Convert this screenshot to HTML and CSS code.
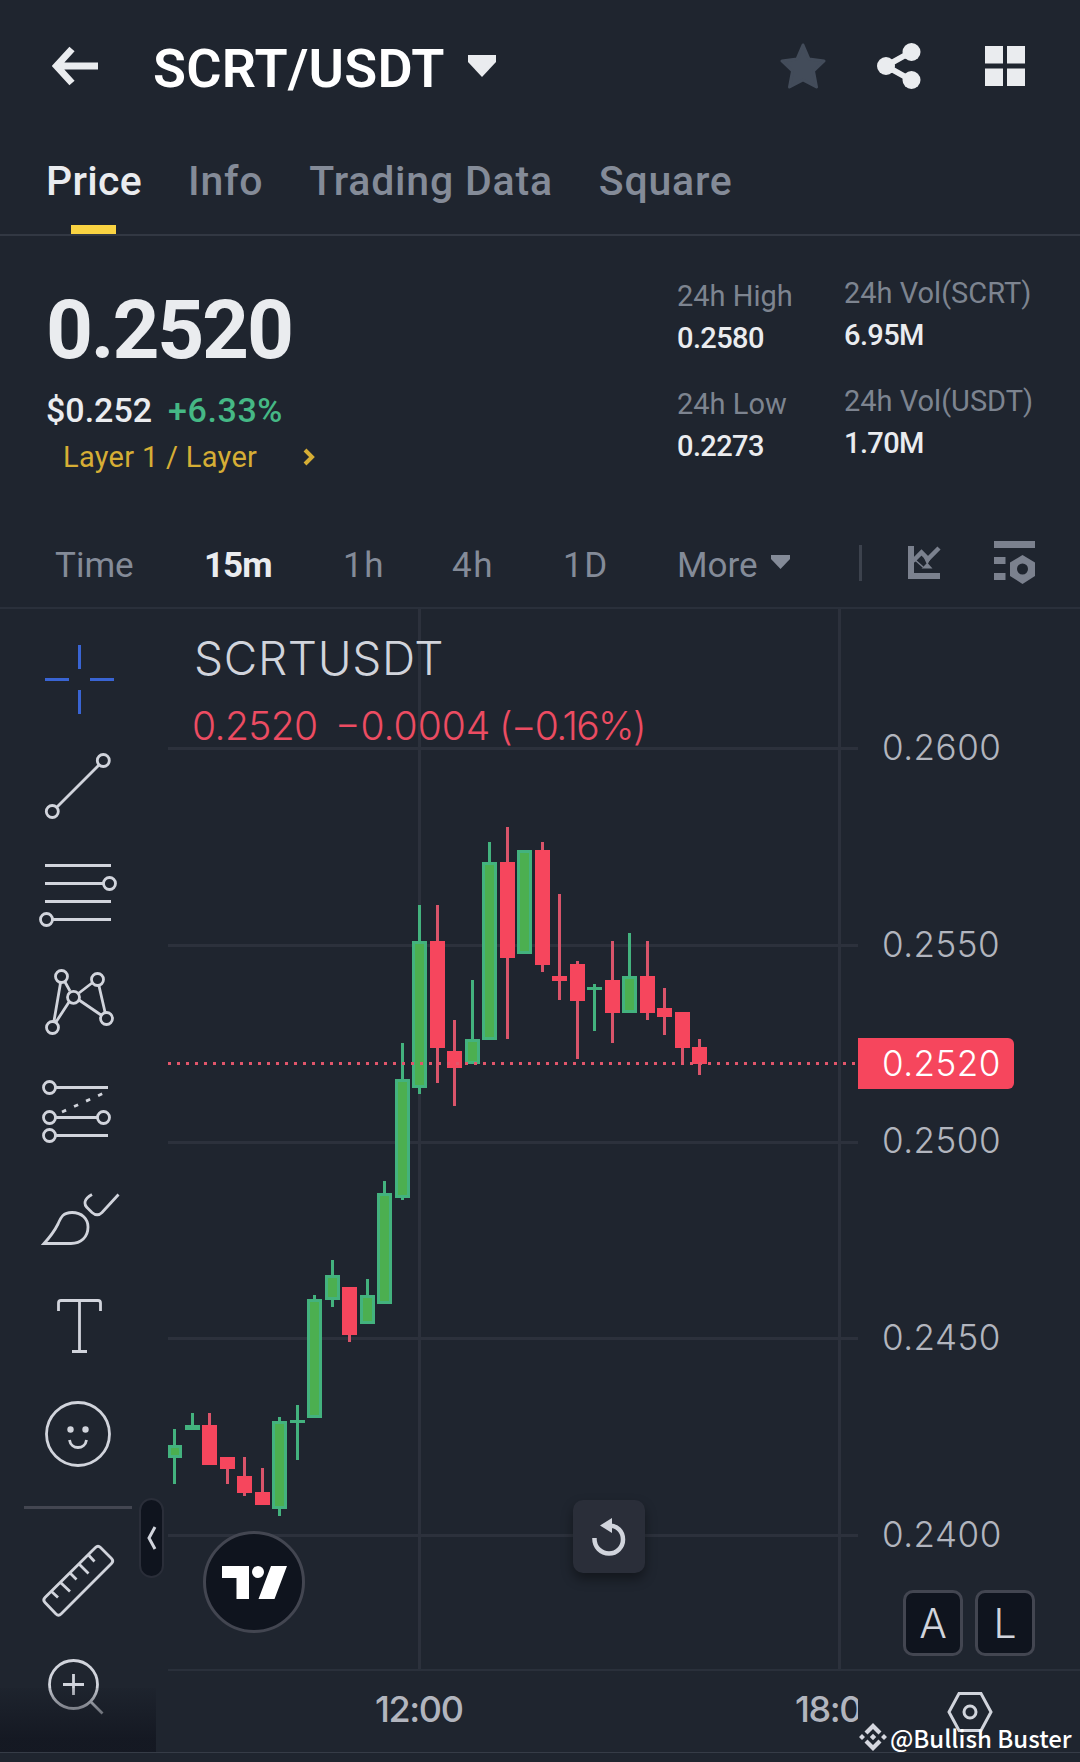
FILE: index.html
```html
<!DOCTYPE html>
<html lang="en">

<head>
    <meta charset="UTF-8">
    <meta name="viewport" content="width=device-width, initial-scale=1.0">
    <title>SCRT/USDT</title>
    <link rel="stylesheet" href="styles.css">
</head>

<body>
    <header class="header">
        <svg class="back" width="48" height="40" viewBox="0 0 48 40"><path d="M20 3L4.500 20L20 37M5 20H46" fill="none" stroke="#eaecef" stroke-width="7"/></svg>
        <h1>SCRT/USDT</h1>
        <svg class="caret" width="28" height="22" viewBox="0 0 28 22"><path d="M0 0H28V7L14 22L0 7Z" fill="#eaecef"/></svg>
        <div class="header-icons">
            <svg width="46" height="48" viewBox="0 0 46 48"><path d="M23 3L29 17L44 19L33.500 29L36.500 45L23 38L9.500 45L12.500 29L2 19L17 17Z" fill="#434c5a" stroke="#434c5a" stroke-width="3" stroke-linejoin="round"/></svg>
            <svg width="44" height="46" viewBox="0 0 44 46"><path d="M34 9L9 23L34 37" fill="none" stroke="#eaecef" stroke-width="6"/><g fill="#eaecef"><circle cx="34.500" cy="9" r="9"/><circle cx="9" cy="23" r="9"/><circle cx="34.500" cy="37" r="9"/></g></svg>
            <svg width="40" height="40" viewBox="0 0 40 40"><path d="M0 0H18V17.500H0ZM22 0H40V17.500H22ZM0 22.500H18V40H0ZM22 22.500H40V40H22Z" fill="#eaecef"/></svg>
        </div>
    </header>

    <nav class="tabs">
        <a class="active">Price</a>
        <a>Info</a>
        <a>Trading Data</a>
        <a>Square</a>
    </nav>

    <section class="ticker">
        <div class="ticker-main">
            <div class="last-price">0.2520</div>
            <div class="change"><span>$0.252</span><span class="up">+6.33%</span></div>
            <div class="category">Layer 1 / Layer <svg width="12" height="18" viewBox="0 0 12 18"><path d="M2 2L9 9L2 16" fill="none" stroke="#d6ae35" stroke-width="4"/></svg></div>
        </div>
        <dl class="stats">
            <dt>24h High</dt>
            <dd>0.2580</dd>
            <dt>24h Low</dt>
            <dd>0.2273</dd>
        </dl>
        <dl class="stats volume">
            <dt>24h Vol(SCRT)</dt>
            <dd>6.95M</dd>
            <dt>24h Vol(USDT)</dt>
            <dd>1.70M</dd>
        </dl>
    </section>

    <div class="intervals">
        <span>Time</span>
        <span class="active">15m</span>
        <span class="spaced">1h</span>
        <span class="spaced">4h</span>
        <span class="spaced">1D</span>
        <span>More<svg class="more-caret" width="19" height="14" viewBox="0 0 19 14"><path d="M0 0H19V4L9.500 14L0 4Z" fill="#848b98"/></svg></span>
        <i class="divider"></i>
        <svg width="33" height="33" viewBox="0 0 33 33"><g fill="none" stroke="#7b818e"><path d="M3 0V30H32" stroke-width="6"/><path d="M5 15L13.500 6.500L20 13L31 2" stroke-width="4.500"/><path d="M6 13L15 21" stroke-width="1.500"/></g><path d="M13.500 22.500H24.500L20 17.500L23 12H16L18.500 17.500Z" fill="#7b818e"/></svg>
        <svg width="42" height="43" viewBox="0 0 42 43"><path d="M0 0H41V7H0ZM0 16H11.500V23H0ZM0 32H11.500V39H0Z" fill="#7b818e"/><path fill-rule="evenodd" d="M28.500 14L41 21.500V35L28.500 43L16 35V21.500ZM28.500 22.500A5.500 5.500 0 1 0 28.500 33.500A5.500 5.500 0 1 0 28.500 22.500Z" fill="#7b818e"/></svg>
    </div>

    <main class="chart">
        <aside class="toolbar">
            <!-- crosshair -->
            <svg class="cross" width="156" height="121" viewBox="0 609 156 121"><path d="M45 679.500H69M90 679.500H114M79.500 645V669M79.500 690V714"/></svg>
            <!-- trend line -->
            <svg width="156" height="110" viewBox="0 730 156 110"><path d="M57 807L99 765"/><circle cx="103.300" cy="760.500" r="6"/><circle cx="52.300" cy="811.500" r="6"/></svg>
            <!-- fib retracement -->
            <svg width="156" height="110" viewBox="0 840 156 110"><path d="M45 865.500H111M45 883.500H103M45 901.500H111M53 919.500H111"/><circle cx="109.500" cy="883.500" r="6"/><circle cx="46.500" cy="919.500" r="6"/></svg>
            <!-- xabcd pattern -->
            <svg width="156" height="110" viewBox="0 950 156 110"><path d="M60.500 983L54 1021M65 982L70 991M79 993L92 983M99 986L105 1012M79 1000L101 1015M69 1002L56 1022"/><circle cx="61.500" cy="976.500" r="6"/><circle cx="97.500" cy="979.500" r="6"/><circle cx="73.500" cy="997.300" r="6"/><circle cx="52.500" cy="1027.500" r="6"/><circle cx="106.500" cy="1018.500" r="6"/></svg>
            <!-- long position -->
            <svg width="156" height="110" viewBox="0 1060 156 110"><path d="M56 1087.500H108M56 1117.500H97M56 1135.500H108"/><path d="M62 1112L104 1093" stroke-dasharray="4.500 8.700"/><circle cx="49.500" cy="1087.500" r="6"/><circle cx="49.500" cy="1117.500" r="6"/><circle cx="103.500" cy="1117.500" r="6"/><circle cx="49.500" cy="1135.500" r="6"/></svg>
            <!-- brush -->
            <svg width="156" height="105" viewBox="0 1170 156 105"><path d="M92 1194.500C84 1199 83 1204 88 1208.500L92 1212.500C96 1216 99 1215.500 102 1212.500L118.500 1194.500"/><path d="M44 1243.500C50 1237 55 1230 58 1224C61 1217 63 1212.500 72 1212.500C82 1212.500 88 1219 88 1227C88 1237 81 1243.500 71 1243.500Z"/></svg>
            <!-- text -->
            <svg width="156" height="105" viewBox="0 1275 156 105"><path d="M58.500 1311V1303Q58.500 1300.500 61 1300.500H98Q100.500 1300.500 100.500 1303V1311M79.500 1300.500V1351.500M72 1351.500H87"/></svg>
            <!-- emoji -->
            <svg width="156" height="122" viewBox="0 1380 156 122"><circle cx="78" cy="1434" r="31.500"/><path d="M69.500 1440C71 1450 85 1450 86.500 1440"/><g fill="#d1d4dc" stroke="none"><circle cx="70.500" cy="1429.500" r="3.200"/><circle cx="85.500" cy="1429.500" r="3.200"/></g></svg>
            <hr>
            <!-- ruler -->
            <svg width="156" height="120" viewBox="0 1510 156 120"><path d="M95.500 1547.500Q98 1545 100.500 1547.500L111.500 1558.500Q114 1561 111.500 1563.500L61 1614Q58.500 1616.500 56 1614L45 1602.500Q42.500 1600 45 1597.500ZM51 1591L58 1597.500M60 1582L70 1591.500M70 1573L76.500 1579.500M79 1564L88.500 1573.500M88.500 1555L94.500 1561.500"/></svg>
            <!-- zoom in -->
            <svg width="156" height="122" viewBox="0 1630 156 122"><circle cx="73.500" cy="1684.500" r="24"/><path d="M63 1684.500H84M73.500 1674V1695M90.500 1701.500L102.500 1713.500"/></svg>
            <div class="fade"></div>
        </aside>

        <div class="pane">
            <svg id="plot" width="702" height="1060" viewBox="156 609 702 1060">
                <g stroke="#2c313c" stroke-width="3">
                    <path d="M168 748.500H858M168 945.500H858M168 1142.500H858M168 1338.500H858M168 1535.500H858"/>
                    <path d="M419.500 609V1669M839.500 609V1669"/>
                </g>
                <g id="candles"></g>
                <path d="M168 1063.500H858" stroke="#e2566b" stroke-width="3" stroke-dasharray="3 6"/>
            </svg>
            <div class="legend">
                <div class="symbol">SCRTUSDT</div>
                <div class="values"><span>0.2520</span><span>−0.0004</span><span>(−0.16%)</span></div>
            </div>
            <div class="handle"><svg width="10" height="24" viewBox="0 0 10 24"><path d="M8 1L2 12L8 23" fill="none" stroke="#d1d4dc" stroke-width="3"/></svg></div>
            <div class="tv-logo"><svg width="65" height="33" viewBox="0 0 65 33"><path d="M0 0H27V33H14.500V12H0ZM49 0H65L52.500 33H36.500Z" fill="#fff"/><circle cx="36" cy="6" r="6" fill="#fff"/></svg></div>
            <button class="reset"><svg width="34" height="38" viewBox="0 0 34 38"><path d="M2.500 20C2 29 9 35.500 17 35.500C25 35.500 31 29 31 21.500C31 13 25 7.500 17 7.500" fill="none" stroke="#d1d4dc" stroke-width="4.500"/><path d="M8 7.500L20 0V15Z" fill="#d1d4dc"/></svg></button>
        </div>

        <div class="price-axis">
            <span>0.2600</span>
            <span>0.2550</span>
            <span>0.2500</span>
            <span>0.2450</span>
            <span>0.2400</span>
            <div class="price-tag">0.2520</div>
            <div class="scale-btns"><button>A</button><button>L</button></div>
        </div>

        <div class="time-axis">
            <span>12:00</span>
            <span>18:00</span>
        </div>
        <div class="axis-settings">
            <svg width="46" height="40" viewBox="0 0 46 40" fill="none" stroke="#d1d4dc" stroke-width="3"><path d="M12 1.500H34L44 20L34 38.500H12L2 20Z"/><circle cx="23" cy="20" r="6"/></svg>
        </div>
    </main>

    <div class="watermark">
        <svg width="28" height="28" viewBox="0 0 28 28" fill="#d5d7df"><path d="M14 0L22.500 8.500L19.500 11.500L14 6L8.500 11.500L5.500 8.500ZM14 28L22.500 19.500L19.500 16.500L14 22L8.500 16.500L5.500 19.500ZM14 10.800L17.200 14L14 17.200L10.800 14ZM3 11L6 14L3 17L0 14ZM25 11L28 14L25 17L22 14Z"/></svg>
        <span>@Bullish Buster</span>
    </div>

    <script>
        // center x, high, body top, body bottom, low, up
        const candles = [
            [174.500, 1429, 1445, 1458, 1484, 1],
            [192.500, 1413, 1425, 1430, 1430, 1],
            [209.500, 1413, 1425, 1465, 1465, 0],
            [227.500, 1457, 1457, 1469, 1484, 0],
            [244.500, 1457, 1476, 1493, 1496, 0],
            [262.500, 1468, 1492, 1505, 1505, 0],
            [279.500, 1417, 1421, 1509, 1516, 1],
            [297.500, 1405, 1420, 1423, 1460, 1],
            [314.500, 1295, 1299, 1418, 1418, 1],
            [332.500, 1260, 1275, 1300, 1307, 1],
            [349.500, 1287, 1287, 1335, 1342, 0],
            [367.500, 1279, 1295, 1324, 1324, 1],
            [384.500, 1181, 1193, 1304, 1304, 1],
            [402.500, 1043, 1079, 1198, 1200, 1],
            [419.500, 905, 941, 1088, 1094, 1],
            [437.500, 905, 941, 1048, 1083, 0],
            [454.500, 1020, 1051, 1068, 1106, 0],
            [472.500, 980, 1039, 1064, 1064, 1],
            [489.500, 842, 862, 1040, 1040, 1],
            [507.500, 827, 862, 958, 1039, 0],
            [524.500, 850, 850, 954, 954, 1],
            [542.500, 842, 850, 965, 972, 0],
            [559.500, 894, 976, 981, 1000, 0],
            [577.500, 961, 964, 1001, 1059, 0],
            [594.500, 984, 987, 990, 1031, 1],
            [612.500, 941, 980, 1013, 1043, 0],
            [629.500, 933, 976, 1013, 1013, 1],
            [647.500, 941, 976, 1013, 1020, 0],
            [664.500, 988, 1008, 1017, 1035, 0],
            [682.500, 1012, 1012, 1048, 1065, 0],
            [699.500, 1039, 1047, 1064, 1075, 0]
        ];

        const group = document.getElementById('candles');

        function rect(x, y, w, h, cls) {
            const r = document.createElementNS('http://www.w3.org/2000/svg', 'rect');
            r.setAttribute('x', x);
            r.setAttribute('y', y);
            r.setAttribute('width', w);
            r.setAttribute('height', h);
            r.setAttribute('class', cls);
            group.appendChild(r);
        }

        candles.forEach(function ([x, high, top, bottom, low, up]) {
            // the first candle is cut by the left edge of the plot
            const left = Math.max(x - 7.500, 168);
            const right = x + 7.500;
            rect(x - 1.500, high, 3, low - high, up ? 'wick-up' : 'wick-down');
            rect(left, top, right - left, bottom - top, up ? 'body-up' : 'body-down');
            if (up && bottom - top > 6) {
                rect(left + 3, top + 3, right - left - 6, bottom - top - 6, 'fill-up');
            }
        });
    </script>
</body>

</html>
```
FILE: styles.css
```css
* {
    box-sizing: border-box;
}

body {
    margin: 0;
    width: 1080px;
    height: 1762px;
    overflow: hidden;
    position: relative;
    background-color: #1f252f;
    color: #eaecef;
    font-family: Roboto, "Liberation Sans", sans-serif;
}

svg {
    display: block;
    flex: none;
}

.header {
    display: flex;
    align-items: center;
    height: 132px;
    padding: 0 55px 0 52px;
}

h1 {
    margin: 5px 0 0 53px;
    font-size: 54px;
    font-weight: 600;
    line-height: 60px;
    letter-spacing: 0.2px;
    color: #fff;
    width: 292px;
    white-space: nowrap;
}

.caret {
    margin-left: 23px;
}

.header-icons {
    display: flex;
    align-items: center;
    margin-left: auto;
}

.header-icons svg:nth-child(2) {
    margin: 0 64px 0 51px;
}

.tabs {
    display: flex;
    gap: 46px;
    height: 104px;
    padding-left: 46px;
    border-bottom: 2px solid #323843;
    font-size: 41px;
    font-weight: 500;
    line-height: 98px;
    letter-spacing: 0.8px;
    color: #848b98;
}

.tabs .active {
    position: relative;
    letter-spacing: 0.3px;
    color: #eaecef;
}

.tabs .active::after {
    content: "";
    position: absolute;
    left: 25px;
    bottom: 0;
    width: 45px;
    height: 9px;
    background-color: #f9d342;
}

.ticker {
    display: flex;
    height: 286px;
}

.ticker-main {
    width: 631px;
    padding: 52px 0 0 46px;
}

.last-price {
    font-size: 82px;
    font-weight: 700;
    line-height: 84px;
    letter-spacing: -2.2px;
}

.change {
    display: flex;
    gap: 16px;
    margin-top: 17px;
    font-size: 34px;
    font-weight: 500;
    line-height: 42px;
}

.up {
    letter-spacing: 0.6px;
    color: #45b885;
}

.category {
    display: flex;
    align-items: center;
    gap: 46px;
    margin: 6px 0 0 17px;
    font-size: 29px;
    line-height: 40px;
    letter-spacing: 0.3px;
    color: #d6ae35;
}

.stats {
    width: 167px;
    margin: 0;
    padding: 39px 0 0 46px;
    font-size: 29px;
    line-height: 42px;
    white-space: nowrap;
}

.volume {
    padding-top: 36px;
}

.stats dt {
    color: #7d8490;
}

.stats dd {
    margin: 0 0 24px;
    font-weight: 500;
    letter-spacing: -0.6px;
}

.intervals {
    display: grid;
    grid-template-columns: 149px 139px 109px 111px 114px 182px 49px 86px 42px;
    align-items: center;
    height: 87px;
    padding-left: 55px;
    border-bottom: 2px solid #2a303b;
    font-size: 35px;
    color: #848b98;
}

.intervals > svg {
    margin-bottom: 5px;
}

.intervals span {
    display: flex;
    align-items: center;
    padding-top: 2px;
}

.intervals .active {
    font-weight: 700;
    letter-spacing: -1px;
    color: #eaecef;
}

.intervals .spaced {
    letter-spacing: 1.5px;
}

.intervals .more-caret {
    margin: 0 0 7px 13px;
}

.divider {
    width: 3px;
    height: 36px;
    margin-bottom: 4px;
    background-color: #3c424d;
}

.chart {
    display: grid;
    grid-template-columns: 156px 702px 222px;
    grid-template-rows: 1060px 83px;
    height: 1144px;
    border-bottom: 1px solid #363c47;
    font-family: Inter, "Liberation Sans", sans-serif;
}

.toolbar {
    grid-row: 1 / 3;
    position: relative;
}

.toolbar svg {
    fill: none;
    stroke: #d1d4dc;
    stroke-width: 2.8px;
}

.toolbar .cross {
    stroke: #3964d3;
    stroke-width: 3px;
}

.toolbar hr {
    width: 108px;
    height: 3px;
    margin: 4px 24px 1px;
    border: none;
    background-color: #434651;
}

.fade {
    position: absolute;
    left: 0;
    bottom: 0;
    width: 156px;
    height: 64px;
    background: linear-gradient(rgba(20, 24, 34, 0.1), rgba(20, 24, 34, 0.95) 80%);
}

.pane {
    position: relative;
}

.wick-up,
.body-up {
    fill: #43b27e;
}

.fill-up {
    fill: #4caf50;
}

.wick-down {
    fill: #d9546a;
}

.body-down {
    fill: #f6465d;
}

.legend {
    position: absolute;
    left: 36px;
    top: 22px;
    font-weight: 300;
}

.symbol {
    padding-left: 2px;
    font-size: 46px;
    line-height: 54px;
    letter-spacing: 0.7px;
    color: #d1d4dc;
}

.values {
    display: flex;
    margin-top: 17px;
    font-size: 39px;
    line-height: 48px;
    color: #ec4c62;
    white-space: nowrap;
}

.values span:nth-child(1) {
    width: 143px;
    letter-spacing: -0.6px;
}

.values span:nth-child(2) {
    width: 164px;
}

.values span:nth-child(3) {
    letter-spacing: -1.6px;
}

.handle {
    position: absolute;
    left: -17px;
    top: 889px;
    display: flex;
    align-items: center;
    justify-content: center;
    width: 25px;
    height: 80px;
    border: 2px solid #2a2e39;
    border-radius: 13px;
    background-color: #0f141e;
}

.tv-logo {
    position: absolute;
    left: 47px;
    top: 922px;
    display: flex;
    align-items: center;
    justify-content: center;
    width: 102px;
    height: 102px;
    border: 3px solid #434651;
    border-radius: 50%;
    background-color: #0f141e;
}

.reset {
    position: absolute;
    left: 417px;
    top: 891px;
    display: flex;
    align-items: center;
    justify-content: center;
    width: 72px;
    height: 73px;
    padding: 0;
    border: none;
    border-radius: 10px;
    background-color: #2a2e39;
    box-shadow: 0 6px 12px rgba(0, 0, 0, 0.4);
}

.price-axis {
    position: relative;
    display: flex;
    flex-direction: column;
    padding: 40px 0 0 24px;
    font-size: 35px;
    font-weight: 300;
    letter-spacing: 0.5px;
    color: #b2b5be;
}

.price-axis span {
    height: 196.7px;
    line-height: 197px;
}

.price-tag {
    position: absolute;
    left: 0;
    top: 429px;
    width: 156px;
    height: 51px;
    padding-left: 24px;
    border-radius: 0 6px 6px 0;
    line-height: 51px;
    background-color: #f6465d;
    color: #fff;
}

.scale-btns {
    position: absolute;
    left: 45px;
    bottom: 13px;
    display: flex;
    gap: 12px;
}

.scale-btns button {
    width: 60px;
    height: 66px;
    padding: 0;
    border: 3px solid #434651;
    border-radius: 10px;
    background-color: #0f141e;
    font: 300 41px Inter, sans-serif;
    color: #d1d4dc;
}

/* labels are cut where the price scale begins */
.time-axis {
    display: flex;
    margin-left: 12px;
    border-top: 2px solid #2a303b;
    padding-left: 207px;
    overflow: hidden;
    font-size: 36px;
    font-weight: 500;
    line-height: 77px;
    letter-spacing: -1.4px;
    color: #b2b5be;
}

.time-axis span {
    flex: none;
    width: 420px;
}

.axis-settings {
    border-top: 2px solid #2a303b;
    padding: 21px 0 0 89px;
}

.watermark {
    position: absolute;
    left: 859px;
    top: 1718px;
    display: flex;
    align-items: center;
    gap: 3px;
    height: 38px;
    font: 500 24px "Noto Sans CJK SC", "Noto Sans", sans-serif;
    color: #fff;
    white-space: nowrap;
}
```
